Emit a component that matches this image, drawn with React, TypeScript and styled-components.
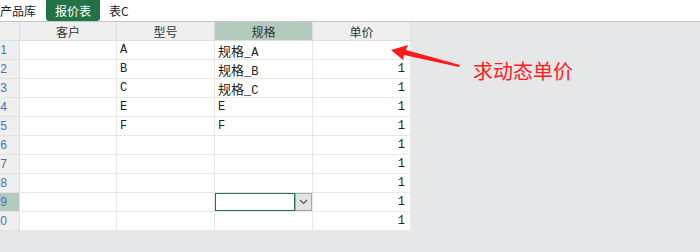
import React from "react";
import styled, { createGlobalStyle } from "styled-components";

const GlobalStyle = createGlobalStyle`
  html, body {
    margin: 0;
    padding: 0;
    background: #e6e7e9;
    font-family: "Noto Sans CJK SC", "Noto Sans", sans-serif;
  }
`;

const StPage = styled.main`
  position: relative;
  width: 700px;
  height: 252px;
  overflow: hidden;
  background: #e6e7e9;
`;

const StTabBar = styled.nav`
  display: flex;
  align-items: stretch;
  height: 21px;
  background: #fff;
  border-bottom: 1px solid #c4c4c4;
`;

const StTab = styled.div<{ $active?: boolean }>`
  display: flex;
  align-items: center;
  justify-content: center;
  font-size: 12px;
  color: ${(p) => (p.$active ? "#fff" : "#222")};
  background: ${(p) => (p.$active ? "#217346" : "transparent")};
  border-radius: ${(p) => (p.$active ? "0 0 3px 3px" : "0")};
  padding: ${(p) => (p.$active ? "0" : "0 9px")};
  width: ${(p) => (p.$active ? "54px" : "auto")};
  &:first-child {
    padding-left: 0;
    padding-right: 10px;
  }
`;

const StGrid = styled.section`
  display: grid;
  grid-template-columns: 20px 97px 98px 98px 98px;
  grid-auto-rows: 19px;
  width: 411px;
  background: #fff;
`;

const StHead = styled.div<{ $selected?: boolean }>`
  display: flex;
  align-items: center;
  justify-content: center;
  font-size: 12px;
  color: #333;
  background: ${(p) => (p.$selected ? "#b4cabc" : "#efefef")};
  border-right: 1px solid #dedede;
  border-bottom: 1px solid #dedede;
`;

const StRowHead = styled.div<{ $selected?: boolean }>`
  display: flex;
  align-items: center;
  justify-content: flex-end;
  overflow: hidden;
  padding-right: 12px;
  font-family: "Liberation Sans", sans-serif;
  font-size: 12px;
  color: #3a78b7;
  background: ${(p) => (p.$selected ? "#b4cabc" : "#efefef")};
  border-right: 1px solid #dedede;
  border-bottom: 1px solid #e3e3e3;
`;

const StCell = styled.div<{ $num?: boolean }>`
  position: relative;
  display: flex;
  align-items: center;
  justify-content: ${(p) => (p.$num ? "flex-end" : "flex-start")};
  padding: ${(p) => (p.$num ? "0 5px 0 0" : "0 0 0 3px")};
  font-family: "Liberation Mono", "Noto Sans CJK SC", monospace;
  font-size: 12px;
  color: #222;
  border-right: 1px solid #e8e8e8;
  border-bottom: 1px solid #e8e8e8;
`;

const StValue = styled.span`
  white-space: nowrap;
`;

const StCjk = styled.span`
  font-family: "Noto Sans CJK SC", sans-serif;
  font-size: 13px;
`;

const StDropdown = styled.div`
  position: absolute;
  left: 0;
  top: 0;
  display: flex;
  width: 98px;
  height: 19px;
`;

const StDropInput = styled.div`
  width: 80px;
  height: 18px;
  box-sizing: border-box;
  border: 1px solid #217346;
  background: #fff;
`;

const StDropButton = styled.div`
  display: flex;
  align-items: center;
  justify-content: center;
  width: 17px;
  height: 18px;
  box-sizing: border-box;
  border: 1px solid #a9a9a9;
  background: #e3e3e3;
`;

const StNote = styled.div`
  position: absolute;
  left: 473px;
  top: 58px;
  font-size: 20px;
  line-height: 26px;
  color: #ff2020;
`;

const StArrow = styled.svg`
  position: absolute;
  left: 388px;
  top: 42px;
`;

type Row = { model: string; spec: string };

const rows: Row[] = [
  { model: "A", spec: "规格_A" },
  { model: "B", spec: "规格_B" },
  { model: "C", spec: "规格_C" },
  { model: "E", spec: "E" },
  { model: "F", spec: "F" },
  { model: "", spec: "" },
  { model: "", spec: "" },
  { model: "", spec: "" },
  { model: "", spec: "" },
  { model: "", spec: "" },
];

function Spec({ text }: { text: string }) {
  // CJK prefix in the sans font, ascii tail in mono
  const m = text.match(/^(规格)(.*)$/);
  if (!m) return <StValue>{text}</StValue>;
  return (
    <StValue>
      <StCjk>{m[1]}</StCjk>
      {m[2]}
    </StValue>
  );
}

export default function App() {
  return (
    <StPage>
      <GlobalStyle />
      <StTabBar>
        <StTab>产品库</StTab>
        <StTab $active>报价表</StTab>
        <StTab>表C</StTab>
      </StTabBar>
      <StGrid>
        <StHead />
        <StHead>客户</StHead>
        <StHead>型号</StHead>
        <StHead $selected>规格</StHead>
        <StHead>单价</StHead>
        {rows.map((row, i) => (
          <React.Fragment key={i}>
            <StRowHead $selected={i === 8}>{i + 1}</StRowHead>
            <StCell />
            <StCell>
              <StValue>{row.model}</StValue>
            </StCell>
            <StCell>
              <Spec text={row.spec} />
              {i === 8 && (
                <StDropdown>
                  <StDropInput />
                  <StDropButton>
                    <svg width="9" height="6" viewBox="0 0 9 6">
                      <path d="M1 1 L4.5 4.5 L8 1" fill="none" stroke="#555" strokeWidth="1.1" />
                    </svg>
                  </StDropButton>
                </StDropdown>
              )}
            </StCell>
            <StCell $num>
              <StValue>{i === 0 ? "" : "1"}</StValue>
            </StCell>
          </React.Fragment>
        ))}
      </StGrid>
      <StArrow width="80" height="30" viewBox="0 0 80 30">
        <polygon points="3,8 20,3 18,8 72,23 71,25 16,13 15,18" fill="#ff1a1a" />
      </StArrow>
      <StNote>求动态单价</StNote>
    </StPage>
  );
}
